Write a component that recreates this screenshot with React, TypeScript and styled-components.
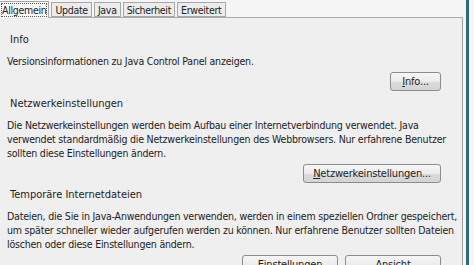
import React from "react";
import styled, { createGlobalStyle } from "styled-components";

const FONT = `"DejaVu Sans Condensed", Tahoma, "DejaVu Sans", sans-serif`;

const Global = createGlobalStyle`
  html, body { margin: 0; padding: 0; background: #f3f3f3; overflow: hidden; }
  body { font-family: ${FONT}; }
`;

const Window = styled.div`
  display: flex;
  width: 474px;
  height: 265px;
  overflow: hidden;
  background: #f5f5f5;
`;

const Dialog = styled.div`
  display: flex;
  flex-direction: column;
  width: 466px;
  flex: none;
  margin-left: -3px;
  padding-top: 1px;
`;

const Frame = styled.div`
  width: 3px;
  flex: none;
  background: #2f6b78;
  margin-left: 3px;
`;

const TabBar = styled.div`
  display: flex;
  align-items: flex-end;
  height: 16px;
  padding-left: 2px;
  gap: 2px;
  position: relative;
  z-index: 1;
`;

const Tab = styled.div<{ $active?: boolean }>`
  font-family: ${FONT};
  font-size: 10.5px;
  letter-spacing: -0.3px;
  color: #222;
  white-space: nowrap;
  height: ${(p) => (p.$active ? "17px" : "15px")};
  line-height: ${(p) => (p.$active ? "16px" : "14px")};
  padding: 0 ${(p) => (p.$active ? "2px" : "3px")};
  border: 1px solid #a7a7a7;
  border-bottom: ${(p) => (p.$active ? "none" : "1px solid #a7a7a7")};
  background: ${(p) => (p.$active ? "#fafafa" : "#ececec")};
  box-sizing: border-box;
  margin-bottom: ${(p) => (p.$active ? "-1px" : "0")};
  span {
    outline: ${(p) => (p.$active ? "1px dotted #555" : "none")};
  }
`;

const Panel = styled.div`
  flex: 1;
  border: 1px solid #a9a9a9;
  border-right-color: #9d9d9d;
  background: #efefef;
  padding: 15px 14px 0 11px;
  font-family: ${FONT};
  font-size: 11px;
  color: #222;
  display: flex;
  flex-direction: column;
`;

const Section = styled.div<{ $top?: number }>`
  display: flex;
  flex-direction: column;
  margin-top: ${(p) => p.$top ?? 0}px;
`;

const Heading = styled.div`
  line-height: 14px;
  padding-left: 1px;
  margin-bottom: 7px;
  white-space: nowrap;
`;

const Text = styled.div`
  font-size: 10.5px;
  line-height: 14px;
  white-space: nowrap;
  letter-spacing: -0.2px;
  margin-left: -2px;
`;

const ButtonRow = styled.div`
  display: flex;
  justify-content: flex-end;
  gap: 7px;
  margin-top: 4px;
  padding-right: 7px;
`;

const Button = styled.div<{ $w: number }>`
  width: ${(p) => p.$w}px;
  height: 19px;
  box-sizing: border-box;
  border: 1px solid #8c8c8c;
  border-radius: 3px;
  background: linear-gradient(#f6f6f6 0%, #ececec 50%, #dcdcdc 51%, #d4d4d4 100%);
  display: flex;
  align-items: center;
  justify-content: center;
  font-size: 11px;
  letter-spacing: -0.2px;
  color: #222;
  white-space: nowrap;
  u { text-decoration: underline; }
`;

export default function App() {
  return (
    <>
      <Global />
      <Window>
        <Dialog>
          <TabBar>
            <Tab $active><span>Allgemein</span></Tab>
            <Tab>Update</Tab>
            <Tab>Java</Tab>
            <Tab>Sicherheit</Tab>
            <Tab>Erweitert</Tab>
          </TabBar>
          <Panel>
            <Section>
              <Heading>Info</Heading>
              <Text>Versionsinformationen zu Java Control Panel anzeigen.</Text>
              <ButtonRow>
                <Button $w={51}><span><u>I</u>nfo...</span></Button>
              </ButtonRow>
            </Section>
            <Section $top={6}>
              <Heading>Netzwerkeinstellungen</Heading>
              <Text>
                Die Netzwerkeinstellungen werden beim Aufbau einer Internetverbindung verwendet. Java
                <br />
                verwendet standardmäßig die Netzwerkeinstellungen des Webbrowsers. Nur erfahrene Benutzer
                <br />
                sollten diese Einstellungen ändern.
              </Text>
              <ButtonRow>
                <Button $w={138}><span><u>N</u>etzwerkeinstellungen...</span></Button>
              </ButtonRow>
            </Section>
            <Section $top={5}>
              <Heading>Temporäre Internetdateien</Heading>
              <Text>
                Dateien, die Sie in Java-Anwendungen verwenden, werden in einem speziellen Ordner gespeichert,
                <br />
                um später schneller wieder aufgerufen werden zu können. Nur erfahrene Benutzer sollten Dateien
                <br />
                löschen oder diese Einstellungen ändern.
              </Text>
              <ButtonRow>
                <Button $w={96}><span>Einstellungen</span></Button>
                <Button $w={96}><span>Ansicht</span></Button>
              </ButtonRow>
            </Section>
          </Panel>
        </Dialog>
        <Frame />
      </Window>
    </>
  );
}
